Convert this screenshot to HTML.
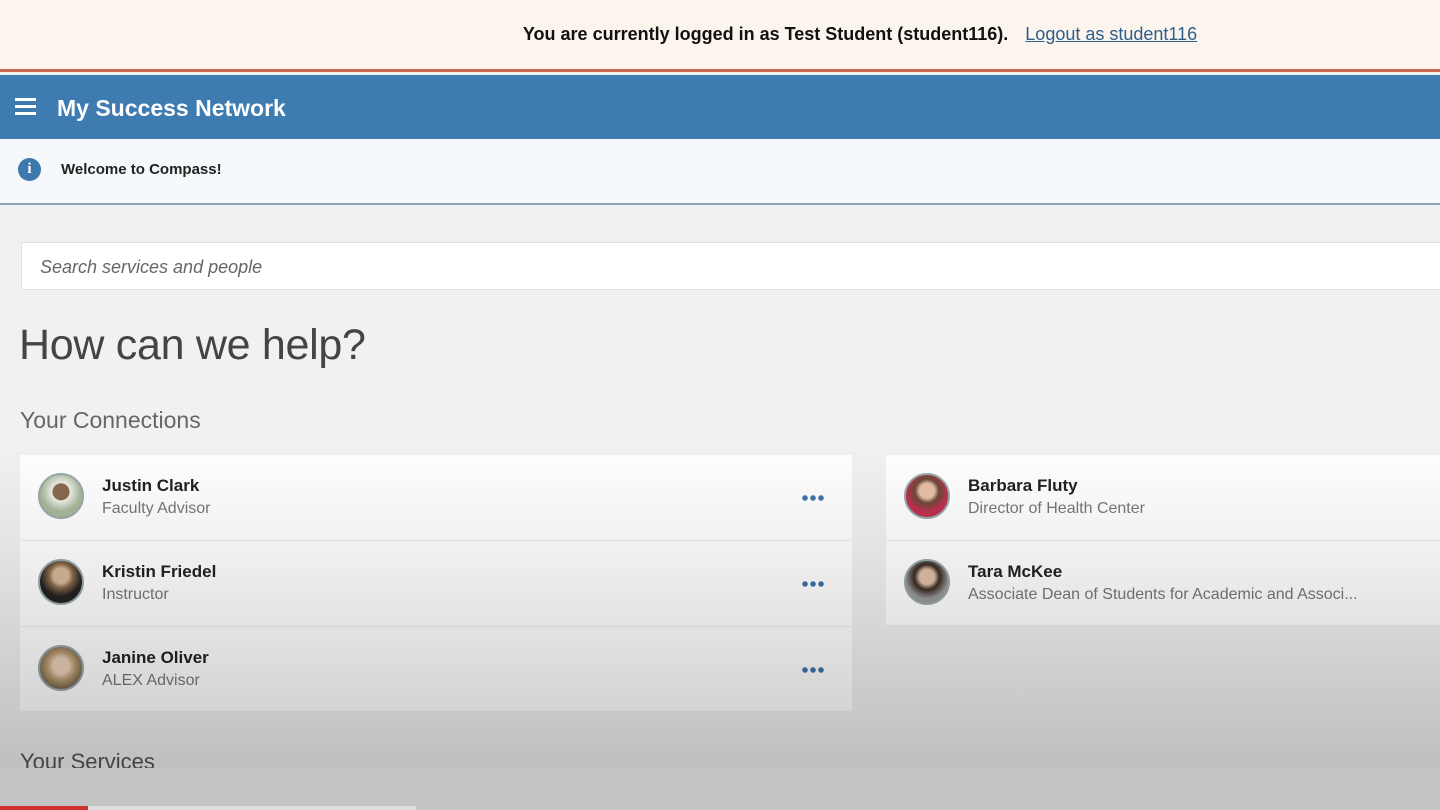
<!DOCTYPE html>
<html><head><meta charset="utf-8"><style>
*{margin:0;padding:0;box-sizing:border-box}
body{width:1440px;height:810px;overflow:hidden;background:#f1f1f1;font-family:"Liberation Sans",Arial,sans-serif;position:relative}
.top{height:72px;background:#fcf5ee;border-bottom:3px solid #c9684f;display:flex;align-items:center;justify-content:center;font-size:18px;padding-left:280px}
.top b{color:#111}
.top a{color:#2d5e8c;margin-left:17px;text-decoration:underline}
.nav{position:absolute;top:75px;left:0;width:1440px;height:64px;background:#3d7bb0;color:#fff}
.nav .t{position:absolute;left:57px;top:20px;font-size:23px;font-weight:bold}
.ham{position:absolute;left:15px;top:98px}
.ham i{display:block;width:21px;height:2.5px;background:#fff;margin-bottom:4.5px}
.info{position:absolute;top:139px;left:0;width:1440px;height:66px;background:#f5f9fb;border-bottom:2px solid #8aa3b6}
.info .ic{position:absolute;left:18px;top:19px;width:23px;height:23px;border-radius:50%;background:#3f78ad;color:#fff;font-size:15px;font-weight:bold;text-align:center;line-height:23px;font-family:"Liberation Serif",serif}
.info .w{position:absolute;left:61px;top:22px;font-size:15px;font-weight:bold;color:#222}
.search{position:absolute;left:21px;top:242px;width:1430px;height:48px;background:#fff;border:1px solid #e0e0e0;font-style:italic;color:#666;font-size:18px;padding:14px 18px}
h1{position:absolute;left:19px;top:321px;font-weight:normal;font-size:43px;color:#444;letter-spacing:-0.3px}
h2{position:absolute;left:20px;top:407px;font-weight:normal;font-size:23px;color:#666}
.card{position:absolute;background:#fff}
.row{position:absolute;left:0;width:100%;height:86px;border-bottom:1px solid #ececec}
.av{position:absolute;left:18px;top:18px;width:46px;height:46px;border-radius:50%;border:2px solid #9aa;}
.nm{position:absolute;left:82px;top:21px;font-size:17px;font-weight:bold;color:#222}
.rl{position:absolute;left:82px;top:45px;font-size:16px;color:#777}
.dots{position:absolute;left:781px;top:40px;width:24px;height:6px;background:radial-gradient(circle,#3e73a8 2.5px,transparent 3px) 0 0/8px 6px repeat-x}
.shade{position:absolute;left:0;top:440px;width:1440px;height:370px;background:linear-gradient(rgba(0,0,0,0),rgba(0,0,0,0.06) 30%,rgba(0,0,0,0.2) 85%,rgba(0,0,0,0.22));pointer-events:none}
.h3{position:absolute;left:20px;top:749px;font-size:22px;color:#555;height:20px;overflow:hidden}
.band{position:absolute;left:0;top:768px;width:1440px;height:42px;background:#c4c4c4}
.prog{position:absolute;left:0;top:806px;width:416px;height:4px;background:#ddd}
.prog i{display:block;width:88px;height:4px;background:#d0302a}
</style></head><body>
<div class="top"><b>You are currently logged in as Test Student (student116).</b><a>Logout as student116</a></div>
<div class="nav"><div class="t">My Success Network</div></div>
<div class="ham"><i></i><i></i><i></i></div>
<div class="info"><div class="ic">i</div><div class="w">Welcome to Compass!</div></div>
<div class="search">Search services and people</div>
<h1>How can we help?</h1>
<h2>Your Connections</h2>
<div class="card" style="left:20px;top:455px;width:832px;height:256px">
<div class="row" style="top:0"><div class="av" style="background:radial-gradient(circle at 50% 40%,#8a6a50 25%,#eef0ea 27%,#a8b89a 60%)"></div><div class="nm">Justin Clark</div><div class="rl">Faculty Advisor</div><div class="dots"></div></div>
<div class="row" style="top:86px"><div class="av" style="background:radial-gradient(circle at 50% 35%,#d8b89a 22%,#8a6a48 35%,#222 60%)"></div><div class="nm">Kristin Friedel</div><div class="rl">Instructor</div><div class="dots"></div></div>
<div class="row" style="top:172px;border:none"><div class="av" style="background:radial-gradient(circle at 50% 45%,#e8d0b8 25%,#b89870 45%,#7a6a50 70%)"></div><div class="nm">Janine Oliver</div><div class="rl">ALEX Advisor</div><div class="dots"></div></div>
</div>
<div class="card" style="left:886px;top:455px;width:560px;height:170px">
<div class="row" style="top:0"><div class="av" style="background:radial-gradient(circle at 50% 38%,#e8c0a8 22%,#6a4a38 36%,#c03050 62%)"></div><div class="nm">Barbara Fluty</div><div class="rl">Director of Health Center</div></div>
<div class="row" style="top:86px;border:none"><div class="av" style="background:radial-gradient(circle at 50% 38%,#e0c0a8 22%,#3a2a22 38%,#999 65%)"></div><div class="nm">Tara McKee</div><div class="rl">Associate Dean of Students for Academic and Associ...</div></div>
</div>
<div class="h3">Your Services</div>
<div class="shade"></div>
<div class="band"></div>
<div class="prog"><i></i></div>
</body></html>
